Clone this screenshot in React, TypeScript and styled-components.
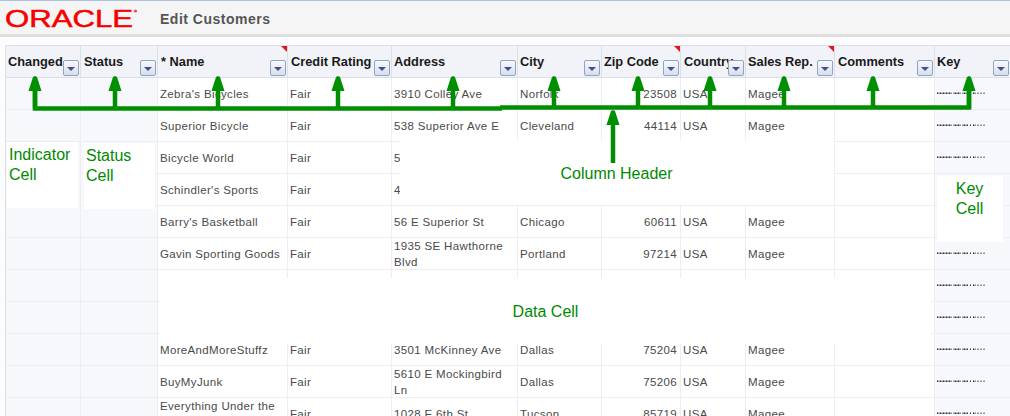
import React from "react";
import styled, { createGlobalStyle } from "styled-components";

const GlobalStyle = createGlobalStyle`
   html, body {
      margin: 0;
      padding: 0;
      background-color: #fcfcfc;
      overflow: hidden;
   }
`;

const Page = styled.div`
   position: relative;
   width: 1010px;
   height: 416px;
   overflow: hidden;
   font-family: "Liberation Sans", Arial, sans-serif;
`;

const Branding = styled.header`
   display: flex;
   align-items: center;
   gap: 22px;
   height: 33px;
   padding-left: 5px;
   background-color: #f5f5f5;
   border-top: 1px solid #a9bfdc;
   border-bottom: 3px solid #dedede;
`;

const Logo = styled.svg`
   display: block;
   width: 133px;
   height: 20px;
`;

const Title = styled.h1`
   margin: 3px 0 0;
   font-size: 14px;
   font-weight: bold;
   letter-spacing: 0.5px;
   color: #555;
`;

const Content = styled.main`
   padding: 8px 0 0 5px;
`;

const Grid = styled.div`
   display: grid;
   grid-template-columns: 75px 77px 130px 104px 126px 84px 79px 65px 89px 100px 75px;
   grid-auto-rows: 32px;
   border-top: 1px solid #d9e0e9;
   border-left: 1px solid #d9e0e9;
`;

const HeaderCell = styled.div<{ $required?: boolean; $last?: boolean; $inset: number }>`
   position: relative;
   display: flex;
   align-items: center;
   box-sizing: border-box;
   padding: 0 1px 0 ${(props) => props.$inset}px;
   background-color: #f1f3f8;
   border-bottom: 1px solid #d9e0e9;
   border-right: ${(props) => (props.$last ? "none" : "1px solid #d9e0e9")};

   &::after {
      content: "";
      display: ${(props) => (props.$required ? "block" : "none")};
      position: absolute;
      top: 0;
      right: 0;
      border-top: 6px solid #e8141c;
      border-left: 6px solid transparent;
   }
`;

const HeaderLabel = styled.span`
   flex: 1 1 0;
   min-width: 0;
   white-space: nowrap;
   font-size: 12.8px;
   font-weight: bold;
   color: #1a1a1a;
   margin-top: -1px;
`;

const SortButton = styled.span`
   position: relative;
   flex: none;
   align-self: flex-end;
   box-sizing: border-box;
   width: 16px;
   height: 16px;
   margin-bottom: 1px;
   border: 1px solid #8fa5c7;
   border-radius: 2px;
   background: linear-gradient(#f8f9fb, #d8dde8);

   &::after {
      content: "";
      position: absolute;
      left: 3px;
      top: 6px;
      border-top: 4px solid #3f4f9a;
      border-left: 4px solid transparent;
      border-right: 4px solid transparent;
   }
`;

const Cell = styled.div<{ $side?: boolean; $right?: boolean; $last?: boolean }>`
   display: flex;
   align-items: center;
   justify-content: ${(props) => (props.$right ? "flex-end" : "flex-start")};
   box-sizing: border-box;
   padding: 0 3px 0 2px;
   font-size: 11.5px;
   line-height: 16px;
   letter-spacing: 0.35px;
   color: #4a4a4a;
   background-color: ${(props) => (props.$side ? "#f6f8fc" : "#fff")};
   border-bottom: 1px solid #eeeef2;
   border-right: ${(props) => (props.$last ? "none" : "1px solid #eeeef2")};
`;

const KeyGlyphs = styled.svg`
   display: block;
   width: 50px;
   height: 4px;
   margin-top: -1px;
`;

const Patch = styled.div<{ $x: number; $y: number; $w: number; $h: number; $center?: boolean }>`
   position: absolute;
   left: ${(props) => props.$x}px;
   top: ${(props) => props.$y}px;
   width: ${(props) => props.$w}px;
   height: ${(props) => props.$h}px;
   box-sizing: border-box;
   display: flex;
   justify-content: ${(props) => (props.$center ? "center" : "flex-start")};
   align-items: ${(props) => (props.$center ? "center" : "flex-start")};
   padding: ${(props) => (props.$center ? "2px 0 0" : "3px 0 0 2px")};
   background-color: #fff;
   color: #008a00;
   font-size: 16px;
   line-height: 20px;
`;

const KeyNote = styled.span`
   width: 100%;
   padding-right: 3px;
   text-align: center;
`;

const Arrows = styled.svg`
   position: absolute;
   left: 0;
   top: 0;
   width: 1010px;
   height: 416px;
   pointer-events: none;
`;

interface Column {
   title: string;
   inset: number;
   required?: boolean;
}

const columns: Column[] = [
   { title: "Changed", inset: 2 },
   { title: "Status", inset: 3 },
   { title: "* Name", inset: 3, required: true },
   { title: "Credit Rating", inset: 3 },
   { title: "Address", inset: 2 },
   { title: "City", inset: 2 },
   { title: "Zip Code", inset: 2, required: true },
   { title: "Country", inset: 3 },
   { title: "Sales Rep.", inset: 2, required: true },
   { title: "Comments", inset: 3 },
   { title: "Key", inset: 2 },
];

const rows: string[][] = [
   ["Zebra's Bicycles", "Fair", "3910 Colley Ave", "Norfolk", "23508", "USA", "Magee"],
   ["Superior Bicycle", "Fair", "538 Superior Ave E", "Cleveland", "44114", "USA", "Magee"],
   ["Bicycle World", "Fair", "5", "", "", "", ""],
   ["Schindler's Sports", "Fair", "4", "", "", "", ""],
   ["Barry's Basketball", "Fair", "56 E Superior St", "Chicago", "60611", "USA", "Magee"],
   ["Gavin Sporting Goods", "Fair", "1935 SE Hawthorne Blvd", "Portland", "97214", "USA", "Magee"],
   ["", "", "", "", "", "", ""],
   ["", "", "", "", "", "", ""],
   ["MoreAndMoreStuffz", "Fair", "3501 McKinney Ave", "Dallas", "75204", "USA", "Magee"],
   ["BuyMyJunk", "Fair", "5610 E Mockingbird Ln", "Dallas", "75206", "USA", "Magee"],
   ["Everything Under the Sun", "Fair", "1028 E 6th St", "Tucson", "85719", "USA", "Magee"],
];

const arrowColumns = [35, 115, 218, 338, 453, 554, 638, 710, 784, 873, 969];

const keyPattern = "##########.#####.####.#.##.#.#.#.";

const KeyMark = () => (
   <KeyGlyphs viewBox="0 0 50 4">
      {keyPattern.split("").map((c, i) =>
         c === "#" ? <rect key={i} x={i * 1.5} y={1.5} width={1} height={1.5} fill="#333" /> : null
      )}
   </KeyGlyphs>
);

const ArrowHead = ({ x, y }: { x: number; y: number }) => (
   <polygon points={`${x},${y} ${x + 2},${y + 1} ${x + 6.5},${y + 15} ${x - 6.5},${y + 15} ${x - 2},${y + 1}`} fill="#008f00" />
);

export default function App() {
   return (
      <Page>
         <GlobalStyle />
         <Branding>
            <Logo viewBox="0 0 133 20">
               <text
                  x="0"
                  y="18.5"
                  textLength="128"
                  lengthAdjust="spacingAndGlyphs"
                  fontFamily="Liberation Sans"
                  fontSize="24"
                  fill="#f80000"
                  stroke="#f80000"
                  strokeWidth="0.5"
               >
                  ORACLE
               </text>
               <circle cx="130.5" cy="3" r="1.6" fill="#f04a4a" />
            </Logo>
            <Title>Edit Customers</Title>
         </Branding>
         <Content>
            <Grid>
               {columns.map((col, i) => (
                  <HeaderCell key={col.title} $inset={col.inset} $required={col.required} $last={i === columns.length - 1}>
                     <HeaderLabel>{col.title}</HeaderLabel>
                     <SortButton />
                  </HeaderCell>
               ))}
               {rows.map((row, r) => (
                  <React.Fragment key={r}>
                     <Cell $side />
                     <Cell $side />
                     {row.map((value, c) => (
                        <Cell key={c} $right={c === 4}>
                           {value}
                        </Cell>
                     ))}
                     <Cell />
                     <Cell $side $last>
                        <KeyMark />
                     </Cell>
                  </React.Fragment>
               ))}
            </Grid>
         </Content>

         <Patch $x={7} $y={142} $w={71} $h={66}>
            <span>
               Indicator
               <br />
               Cell
            </span>
         </Patch>
         <Patch $x={84} $y={143} $w={71} $h={66}>
            <span>
               Status
               <br />
               Cell
            </span>
         </Patch>
         <Patch $x={937} $y={176} $w={66} $h={66}>
            <KeyNote>
               Key
               <br />
               Cell
            </KeyNote>
         </Patch>
         <Patch $x={400} $y={141} $w={433} $h={64} $center>
            Column Header
         </Patch>
         <Patch $x={160} $y={278} $w={771} $h={66} $center>
            Data Cell
         </Patch>

         <Arrows viewBox="0 0 1010 416">
            <path d="M35 90 V108.5 H502" fill="none" stroke="#008f00" strokeWidth="4.5" />
            <path d="M500 107.5 H969 V90" fill="none" stroke="#008f00" strokeWidth="4.5" />
            <path d="M613 125 V163" fill="none" stroke="#008f00" strokeWidth="4.5" />
            {arrowColumns.map((x) => (
               <React.Fragment key={x}>
                  <path d={`M${x} 90 V108`} fill="none" stroke="#008f00" strokeWidth="4.5" />
                  <ArrowHead x={x} y={76} />
               </React.Fragment>
            ))}
            <ArrowHead x={613} y={110} />
         </Arrows>
      </Page>
   );
}
